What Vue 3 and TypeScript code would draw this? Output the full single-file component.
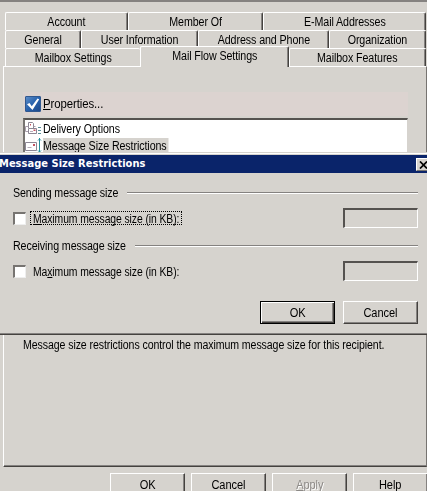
<script setup lang="ts">
import { ref } from 'vue'

interface Tab { label: string; cls: string }
interface Limit { title: string; key: [string, string, string]; focused: boolean; cls: string }

const rows: Tab[][] = [
  [
    { label: 'Account', cls: 'account' },
    { label: 'Member Of', cls: 'member' },
    { label: 'E-Mail Addresses', cls: 'email' },
  ],
  [
    { label: 'General', cls: 'general' },
    { label: 'User Information', cls: 'user' },
    { label: 'Address and Phone', cls: 'address' },
    { label: 'Organization', cls: 'organization' },
  ],
  [
    { label: 'Mailbox Settings', cls: 'mailbox' },
    { label: 'Mail Flow Settings', cls: 'flow' },
    { label: 'Mailbox Features', cls: 'features' },
  ],
]
const active = ref('Mail Flow Settings')
const limits: Limit[] = [
  { title: 'Sending message size', key: ['', 'M', 'aximum message size (in KB):'], focused: true, cls: 'sending' },
  { title: 'Receiving message size', key: ['Ma', 'x', 'imum message size (in KB):'], focused: false, cls: 'receiving' },
]
</script>

<template>
  <main class="window">
    <nav class="tabs">
      <div v-for="(row, i) in rows" :key="i" class="tab-row">
        <div v-for="tab in row" :key="tab.label" class="tab" :class="[tab.cls, { active: tab.label === active }]">
          <span>{{ tab.label }}</span>
        </div>
      </div>
    </nav>

    <section class="panel">
      <div class="toolbar">
        <svg class="check" width="16" height="16" viewBox="0 0 16 16">
          <defs>
            <linearGradient id="blue" x1="0" y1="0" x2="1" y2="1">
              <stop offset="0" stop-color="#5f8fc9" />
              <stop offset="0.5" stop-color="#2862ad" />
              <stop offset="1" stop-color="#1c4687" />
            </linearGradient>
          </defs>
          <rect x="0.5" y="0.5" width="15" height="15" rx="0.5" fill="url(#blue)" stroke="#31588f" />
          <path d="M2 8.200 4.500 7 6.800 10.200 12.500 2.500 14.200 3.300 7.500 14Z" fill="#fff" />
        </svg>
        <span class="properties"><u>P</u>roperties...</span>
      </div>
      <div class="list">
        <div class="item">
          <svg width="18" height="17" viewBox="0 0 18 17">
            <path d="M3.500 7V1.500h4l1 1V7" fill="#fff" stroke="#8d8794" />
            <path d="M.5 5.500h3M.5 5.500v5h3M8.500 5.500h2" fill="none" stroke="#aaa0ad" />
            <path d="M3.500 7.500h8v5h-8z" fill="#fff" stroke="#8d8794" />
            <path d="M8.500 8.500h2v1.500h-2zM5 3h1v1.500H5z" fill="#c55260" />
            <path d="M5 10.500h3" stroke="#b7adba" />
            <path d="M13 6.500h3M13 9.500h3M13 12.500h3" stroke="#5a8f99" />
          </svg>
          <span class="label delivery">Delivery Options</span>
        </div>
        <div class="item selected">
          <svg width="18" height="17" viewBox="0 0 18 17">
            <path d="M.5 4.500h11v8H.5z" fill="#fff" stroke="#8d8794" />
            <path d="M8 6h2v2H8z" fill="#c55260" />
            <path d="M2.500 9.500h4" stroke="#b7adba" />
            <path d="M14.500 0v15M13 2.500 14.500 1 16 2.500M13 12.500l1.500 1.500 1.500-1.500" fill="none" stroke="#27909b" />
          </svg>
          <span class="label restrictions">Message Size Restrictions</span>
        </div>
      </div>
      <p class="description">Message size restrictions control the maximum message size for this recipient.</p>
    </section>

    <footer class="actions">
      <button class="btn"><span>OK</span></button>
      <button class="btn"><span>Cancel</span></button>
      <button class="btn disabled" disabled><span><u>A</u>pply</span></button>
      <button class="btn"><span>Help</span></button>
    </footer>

    <section class="dialog" role="dialog">
      <header class="title">
        <span>Message Size Restrictions</span>
        <button class="close">
          <svg width="9" height="8" viewBox="0 0 9 8"><path d="M1 .5 8 7.500M8 .5 1 7.500" stroke="#000" stroke-width="1.700" /></svg>
        </button>
      </header>
      <div v-for="limit in limits" :key="limit.title" class="limit" :class="limit.cls">
        <div class="legend"><span>{{ limit.title }}</span><i /></div>
        <div class="field">
          <span class="box" />
          <span class="caption" :class="{ focused: limit.focused }"><span>{{ limit.key[0] }}<u>{{ limit.key[1] }}</u>{{ limit.key[2] }}</span></span>
          <span class="input" />
        </div>
      </div>
      <div class="dialog-actions">
        <button class="btn default"><span>OK</span></button>
        <button class="btn"><span>Cancel</span></button>
      </div>
    </section>
  </main>
</template>

<style>
body { margin: 0; overflow: hidden; background: #d6d3ce; }
</style>

<style scoped>
* { box-sizing: border-box; }
.window {
  position: relative; width: 427px; height: 491px; overflow: hidden;
  padding-top: 10px; border-top: 2px solid #858280; background: #d6d3ce; color: #000;
  font: 12px/14px "Liberation Sans", Arial, sans-serif; letter-spacing: -.1px;
  display: flex; flex-direction: column; white-space: nowrap;
}
u { text-decoration: underline; text-underline-offset: 1px; text-decoration-thickness: 1px; }
.tab span, .btn span { display: inline-block; transform: scaleX(.89); }
.btn span { transform: scaleX(.92); }
.tabs { padding-left: 5px; flex: none; }
.tab-row { display: flex; height: 18px; }
.tab {
  flex: none; height: 18px; padding-top: 2px; text-align: center;
  border-top: 1px solid #fff; border-left: 1px solid #fff; border-right: 1px solid #45423f;
  box-shadow: inset -1px 0 #858280; border-radius: 2px 2px 0 0;
}
.account { width: 123px; }
.member { width: 135px; }
.email { width: 163px; }
.general { width: 76px; }
.user { width: 117px; }
.address { width: 131px; }
.organization { width: 97px; }
.mailbox { width: 135px; border-right: 0; box-shadow: none; }
.flow { width: 149px; }
.features { width: 137px; }
.tab.active { height: 21px; margin-top: -2px; background: #d6d3ce; z-index: 1; }
.panel {
  flex: none; width: 424px; height: 401px; margin-left: 3px; padding: 25px 18px 0 19px;
  border: 1px solid #fff; border-right-color: #777471; border-bottom-color: #45423f;
  box-shadow: inset 0 -1px #858280;
}
.toolbar { display: flex; align-items: center; height: 24px; margin-bottom: 2px; background: #dcd3d0; }
.check { margin-left: 2px; margin-right: 2px; }
.properties { transform: scaleX(.95); transform-origin: left; }
.list {
  height: 180px; background: #fff; padding-top: 1px;
  border-top: 2px solid #55524f; border-left: 2px solid #777471; border-right: 1px solid #d6d3ce;
}
.item { display: flex; height: 17px; align-items: center; }
.item svg { flex: none; }
.label { height: 17px; line-height: 17px; transform: scaleX(.89); transform-origin: left; }
.selected .label { background: #d6d3ce; padding-right: 2px; }
.description { width: 406px; margin: 40px 0 0; transform: scaleX(.882); transform-origin: left; }
.actions { display: flex; gap: 6px; padding: 6px 0 0 110px; }
.btn {
  flex: none; width: 75px; height: 23px; padding: 0; font: inherit; letter-spacing: inherit; color: #000;
  background: #d6d3ce; border: 1px solid #fff; border-right-color: #45423f; border-bottom-color: #45423f;
  box-shadow: inset -1px -1px #858280;
  border-radius: 0; line-height: 20px; text-align: center;
}
.btn.disabled { color: #8c8986; text-shadow: 1px 1px #fff; }
.dialog {
  position: absolute; left: 0; top: 150px; width: 427px; height: 183px; background: #d6d3ce;
  border-top: 1px solid #d6d3ce; border-bottom: 1px solid #45423f; padding-top: 2px;
  box-shadow: inset 0 1px #fff, inset 0 -1px #858280;
}
.title {
  display: flex; align-items: center; justify-content: space-between; height: 18px;
  color: #fff; background: #0a246a; font: bold 11px/18px "DejaVu Sans Condensed", "DejaVu Sans", sans-serif;
  letter-spacing: .03px;
}
.title > span { margin-left: -1px; }
.close {
  width: 11px; height: 13px; padding: 2px 0 0 2px; overflow: hidden; background: #d6d3ce;
  border: 1px solid #fff; border-right: 0; border-bottom-color: #777471; display: flex; align-items: flex-start;
}
.close svg { flex: none; }
.limit { height: 53px; padding: 0 9px 0 13px; }
.sending { margin-top: 13px; }
.legend { display: flex; align-items: center; height: 14px; }
.legend span { flex: none; width: 114px; transform: scaleX(.888); transform-origin: left; }
.receiving .legend span { width: 122px; }
.legend i { flex: 1; height: 2px; border-top: 1px solid #858280; border-bottom: 1px solid #fff; }
.field { display: flex; align-items: center; height: 20px; margin-top: 8px; }
.box { width: 13px; height: 13px; background: #fff; border: 1px solid #777471; border-top-width: 2px; border-left-width: 2px; border-right-color: #eee; border-bottom-color: #eee; margin-right: 4px; }
.caption { width: 152px; height: 14px; padding: 0 2px; border: 1px solid transparent; line-height: 14px; }
.caption span { display: inline-block; transform: scaleX(.865); transform-origin: left; }
.caption.focused { border: 1px dotted #000; }
.input { width: 75px; height: 20px; margin-left: auto; border: 2px solid #55524f; border-right: 1px solid #fff; border-bottom: 1px solid #fff; }
.dialog-actions { display: flex; gap: 8px; padding: 9px 0 0 260px; }
.default { border-color: #000; box-shadow: inset 1px 1px #fff, inset -1px -1px #45423f, inset -2px -2px #858280; }
</style>
